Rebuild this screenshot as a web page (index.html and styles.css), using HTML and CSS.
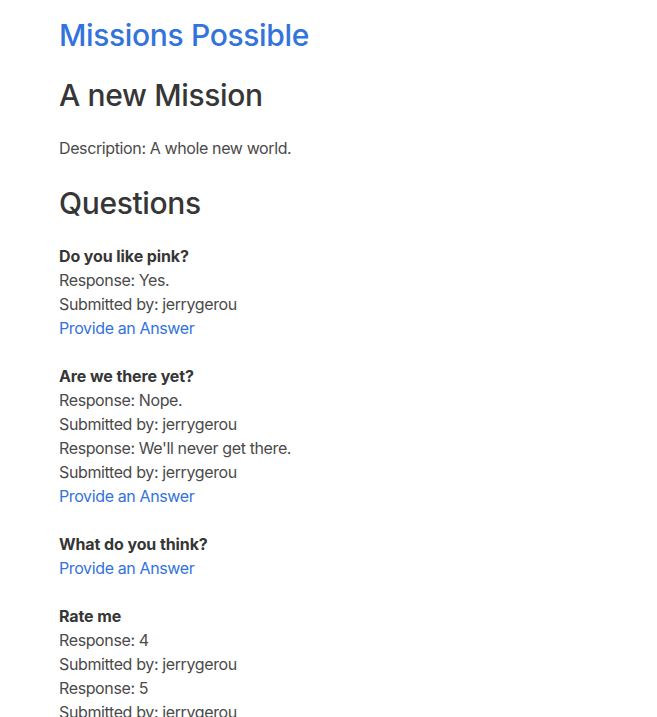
FILE: index.html
```html
<!DOCTYPE html>
<html lang="en">
<head>
<meta charset="utf-8">
<title>Missions Possible</title>
<link rel="stylesheet" href="styles.css">
</head>
<body>
<main class="page">
  <h1 class="brand"><a href="#">Missions Possible</a></h1>
  <h2 class="title">A new Mission</h2>
  <p class="desc">Description: A whole new world.</p>
  <h2 class="title">Questions</h2>
  <div class="question">
    <strong>Do you like pink?</strong>
    <span>Response: Yes.</span>
    <span>Submitted by: jerrygerou</span>
    <a href="#">Provide an Answer</a>
  </div>
  <div class="question">
    <strong>Are we there yet?</strong>
    <span>Response: Nope.</span>
    <span>Submitted by: jerrygerou</span>
    <span>Response: We'll never get there.</span>
    <span>Submitted by: jerrygerou</span>
    <a href="#">Provide an Answer</a>
  </div>
  <div class="question">
    <strong>What do you think?</strong>
    <a href="#">Provide an Answer</a>
  </div>
  <div class="question">
    <strong>Rate me</strong>
    <span>Response: 4</span>
    <span>Submitted by: jerrygerou</span>
    <span>Response: 5</span>
    <span>Submitted by: jerrygerou</span>
    <a href="#">Provide an Answer</a>
  </div>
</main>
</body>
</html>
```

FILE: styles.css
```css
html, body {
  margin: 0;
  padding: 0;
  background: #fff;
}
body {
  font-family: Inter, "Noto Sans", "Liberation Sans", sans-serif;
  font-size: 16px;
  line-height: 24px;
  letter-spacing: -0.38px;
  color: #4a4a4a;
}
a {
  color: #3273dc;
  text-decoration: none;
}
.page {
  padding: 17px 0 0 59px;
}
.brand, .title {
  margin: 0 0 24px;
  font-size: 30px;
  line-height: 36px;
  font-weight: 500;
  letter-spacing: -0.35px;
  color: #363636;
}
.desc {
  margin: -1px 0 25px;
}
.question {
  display: flex;
  flex-direction: column;
  margin-bottom: 24px;
}
.question:first-of-type {
  margin-top: -1px;
}
.question strong {
  font-weight: 700;
  letter-spacing: -0.1px;
  color: #363636;
}
```
